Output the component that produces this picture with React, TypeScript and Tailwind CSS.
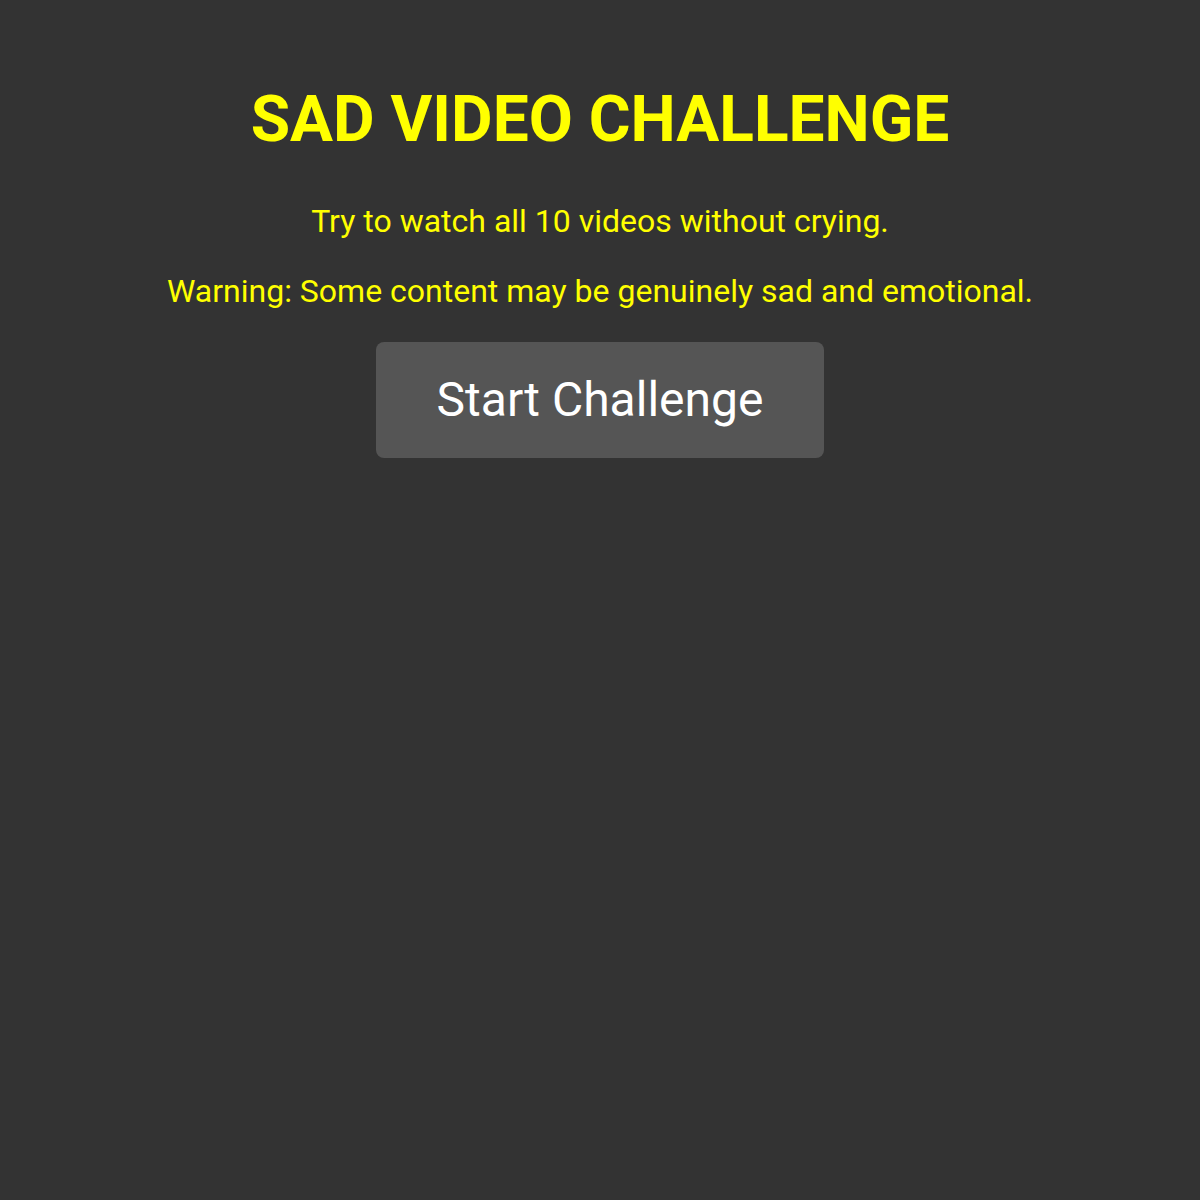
export default function App() {
  return (
    <div className="min-h-[1200px] bg-[#333333] text-center font-['Roboto',sans-serif] flex flex-col items-center pt-[82px]">
      <h1 className="text-[64px] leading-[75px] font-bold text-[#ffff00] m-0">SAD VIDEO CHALLENGE</h1>
      <p className="text-[32px] leading-[37px] text-[#ffff00] mt-[46px]">Try to watch all 10 videos without crying.</p>
      <p className="text-[32px] leading-[37px] text-[#ffff00] mt-[33px]">Warning: Some content may be genuinely sad and emotional.</p>
      <button className="mt-[32px] bg-[#555555] text-white text-[48px] leading-[56px] px-[61px] py-[30px] rounded-[8px] whitespace-nowrap">Start Challenge</button>
    </div>
  );
}
